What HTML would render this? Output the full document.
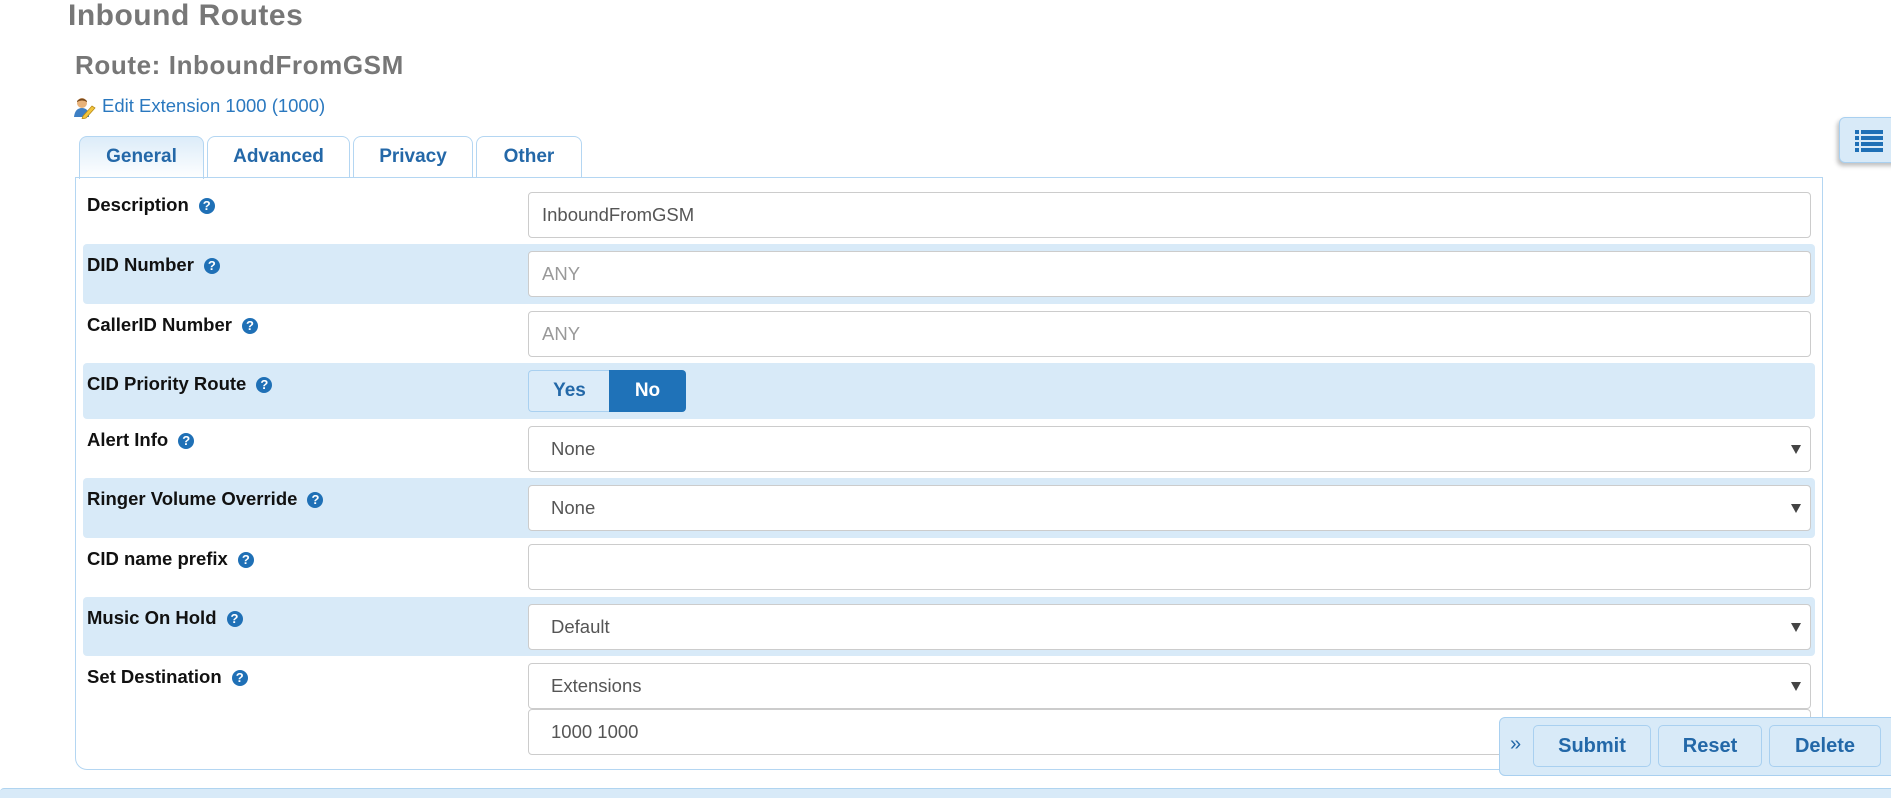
<!DOCTYPE html>
<html><head><meta charset="utf-8"><style>
*{box-sizing:border-box;margin:0;padding:0}
body{width:1891px;height:796px;overflow:hidden;background:#fff;font-family:"Liberation Sans",Arial,sans-serif;position:relative}
.abs{position:absolute}
h1{position:absolute;left:68px;top:-1px;font-size:30px;font-weight:bold;color:#777;letter-spacing:0.5px;white-space:nowrap}
h2{position:absolute;left:75px;top:50px;font-size:26px;font-weight:bold;color:#777;white-space:nowrap;letter-spacing:0.6px}
.edit{position:absolute;left:102px;top:95px;font-size:18.5px;color:#2a78bf;white-space:nowrap}
.tab{position:absolute;top:136px;height:42px;border:1px solid #b4d6f2;border-bottom:none;border-radius:8px 8px 0 0;background:#fff;color:#2468a8;font-weight:bold;font-size:19px;text-align:center;line-height:40px}
.tab.act{background:linear-gradient(#dcecf9,#fff);height:43px}
.panel{position:absolute;left:75px;top:177px;width:1748px;height:593px;border:1px solid #b4d6f2;border-radius:0 0 0 12px}
.row{position:absolute;left:83px;width:1732px;border-radius:4px}
.blue{background:#d8eaf8}
.lbl{position:absolute;left:87px;font-size:18.5px;font-weight:bold;color:#111;white-space:nowrap}
.q{display:inline-block;width:16px;height:16px;border-radius:50%;background:#1f70b6;color:#fff;font-size:13px;line-height:16px;text-align:center;vertical-align:1px;margin-left:10px}
.in{position:absolute;left:528px;width:1283px;height:46px;border:1px solid #ccc;border-radius:4px;background:#fff;font-size:18.5px;color:#555;line-height:44px;padding-left:13px;white-space:nowrap}
.sel{padding-left:22px}
.sel:after{content:"";position:absolute;right:9px;top:18px;border-left:5px solid transparent;border-right:5px solid transparent;border-top:9px solid #444}
.ph{color:#999}
.btn{position:absolute;top:725px;height:42px;border:1px solid #a9d0f0;border-radius:5px;background:#d8eaf8;color:#2368a8;font-weight:bold;font-size:20px;text-align:center;line-height:40px}
</style></head><body>
<h1>Inbound Routes</h1>
<h2>Route: InboundFromGSM</h2>
<svg class="abs" style="left:73px;top:97px" width="23" height="22" viewBox="0 0 23 22">
<circle cx="9" cy="6" r="5" fill="#e8b27a"/><path d="M4 4 Q9 -1 14 4 L14 5 Q9 2 4 5Z" fill="#7a4a1c"/>
<path d="M1 20 Q2 11 9 11 Q15 11 16 18 L16 20Z" fill="#3d7fc4"/>
<path d="M10 19 L19 9 L22 11 L13 21 L9 22Z" fill="#f2c53d" stroke="#b88a18" stroke-width="0.8"/>
</svg>
<div class="edit">Edit Extension 1000 (1000)</div>
<div class="tab act" style="left:79px;width:125px">General</div>
<div class="tab" style="left:207px;width:143px">Advanced</div>
<div class="tab" style="left:353px;width:120px">Privacy</div>
<div class="tab" style="left:476px;width:106px">Other</div>
<div class="panel"></div>

<div class="row blue" style="top:244px;height:60px"></div>
<div class="row blue" style="top:363px;height:56px"></div>
<div class="row blue" style="top:478px;height:60px"></div>
<div class="row blue" style="top:597px;height:59px"></div>

<div class="lbl" style="top:194px">Description<span class="q">?</span></div>
<div class="lbl" style="top:254px">DID Number<span class="q">?</span></div>
<div class="lbl" style="top:314px">CallerID Number<span class="q">?</span></div>
<div class="lbl" style="top:373px">CID Priority Route<span class="q">?</span></div>
<div class="lbl" style="top:429px">Alert Info<span class="q">?</span></div>
<div class="lbl" style="top:488px">Ringer Volume Override<span class="q">?</span></div>
<div class="lbl" style="top:548px">CID name prefix<span class="q">?</span></div>
<div class="lbl" style="top:607px">Music On Hold<span class="q">?</span></div>
<div class="lbl" style="top:666px">Set Destination<span class="q">?</span></div>

<div class="in" style="top:192px">InboundFromGSM</div>
<div class="in ph" style="top:251px">ANY</div>
<div class="in ph" style="top:311px">ANY</div>
<div class="abs" style="left:528px;top:370px;width:82px;height:42px;border:1px solid #a9d0f0;border-right:none;border-radius:4px 0 0 4px;background:#dcecf9;color:#2368a8;font-weight:bold;font-size:19px;text-align:center;line-height:40px">Yes</div>
<div class="abs" style="left:609px;top:370px;width:77px;height:42px;border-radius:0 4px 4px 0;background:#1f72b8;color:#fff;font-weight:bold;font-size:19px;text-align:center;line-height:42px">No</div>
<div class="in sel" style="top:426px">None</div>
<div class="in sel" style="top:485px">None</div>
<div class="in" style="top:544px"></div>
<div class="in sel" style="top:604px">Default</div>
<div class="in sel" style="top:663px">Extensions</div>
<div class="in" style="top:709px;padding-left:22px">1000 1000</div>

<div class="abs" style="left:1839px;top:117px;width:60px;height:46px;background:#d8eaf8;border:1px solid #a9d0f0;border-radius:6px 0 0 6px;box-shadow:-2px 3px 4px rgba(0,0,0,.25)"></div>
<svg class="abs" style="left:1855px;top:130px" width="28" height="22" viewBox="0 0 28 22">
<g fill="#1f70b6"><rect x="0" y="0" width="4" height="4"/><rect x="6" y="0" width="22" height="4"/><rect x="0" y="6" width="4" height="4"/><rect x="6" y="6" width="22" height="4"/><rect x="0" y="12" width="4" height="4"/><rect x="6" y="12" width="22" height="4"/><rect x="0" y="18" width="4" height="4"/><rect x="6" y="18" width="22" height="4"/></g></svg>

<div class="abs" style="left:1499px;top:717px;width:400px;height:59px;background:#d8eaf8;border:1px solid #a9d0f0;border-radius:6px"></div>
<div class="abs" style="left:1510px;top:733px;color:#2368a8;font-size:20px">»</div>
<div class="btn" style="left:1533px;width:118px">Submit</div>
<div class="btn" style="left:1658px;width:104px">Reset</div>
<div class="btn" style="left:1769px;width:112px">Delete</div>

<div class="abs" style="left:0;top:788px;width:1891px;height:10px;background:#d8eaf8;border-top:1px solid #b0d4f0;border-radius:4px 0 0 0"></div>
</body></html>
